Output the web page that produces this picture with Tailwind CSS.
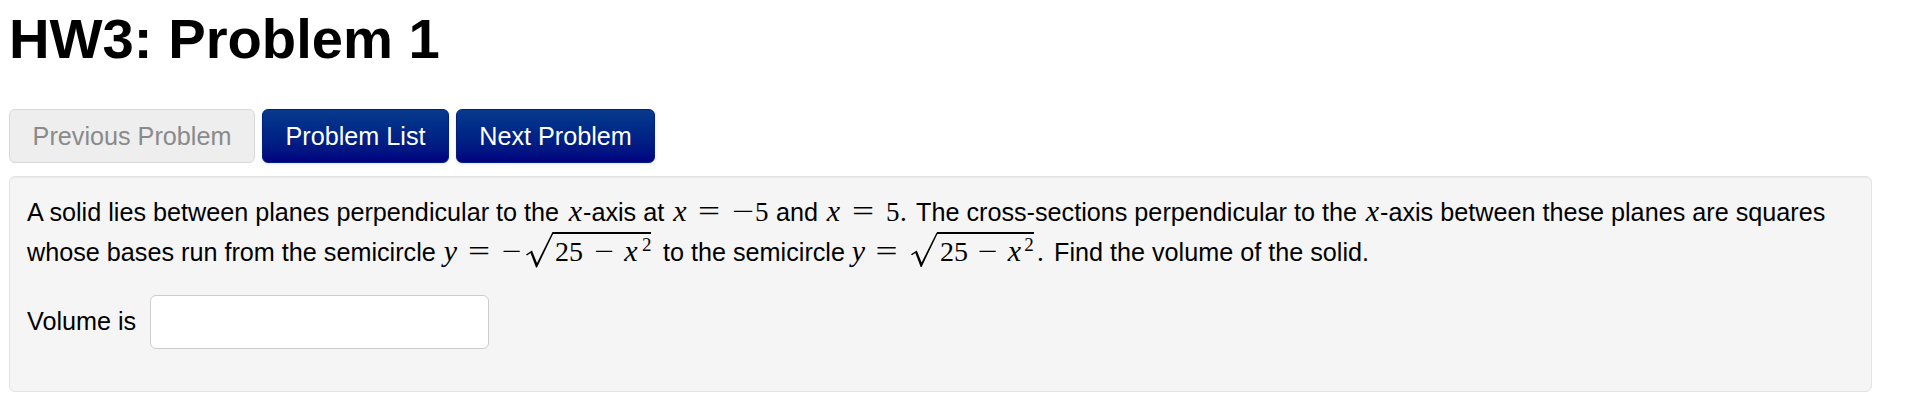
<!DOCTYPE html>
<html>
<head>
  <title>HW3: Problem 1</title>
  <script src="https://cdn.jsdelivr.net/npm/@tailwindcss/browser@4"></script>
</head>
<body class="bg-white text-black font-['Liberation_Sans',Arial,sans-serif]">
  <div class="pl-[9px] pr-[39px]">
    <h1 class="pt-[6px] h-[109px] text-[56.2px] leading-[66px] font-bold">HW3: Problem 1</h1>

    <!-- nav buttons -->
    <div class="flex gap-[7px] text-[25.2px]">
      <a class="flex items-center justify-center w-[246px] h-[54px] pt-[2px] rounded-md border border-[#d8d8d8] bg-[#eeeeee] text-[#8a8a8a]">Previous Problem</a>
      <a class="flex items-center justify-center w-[187px] h-[54px] pt-[2px] rounded-md border border-[#00207f] bg-linear-to-b from-[#0a3a8c] to-[#00007f] text-white shadow-sm">Problem List</a>
      <a class="flex items-center justify-center w-[199px] h-[54px] pt-[2px] rounded-md border border-[#00207f] bg-linear-to-b from-[#0a3a8c] to-[#00007f] text-white shadow-sm">Next Problem</a>
    </div>

    <!-- problem body -->
    <div class="mt-[13px] h-[216px] rounded-md border border-[#e3e3e3] bg-[#f5f5f5] px-[17px] pt-[14px] text-[25.2px] leading-[40px] shadow-[inset_0_1px_1px_rgba(0,0,0,0.05)]">
      <div class="flex items-baseline h-[40px] whitespace-nowrap">
        <span class="flex-none w-[541px]">A solid lies between planes perpendicular to the</span>
        <i class="flex-none w-[15px] text-center font-['Liberation_Serif',serif] text-[30px]">x</i>
        <span class="flex-none w-[90px]">-axis at</span>
        <i class="flex-none w-[14px] text-center font-['Liberation_Serif',serif] text-[30px]">x</i>
        <span class="flex-none ml-[11px] w-[22px] text-center font-['Liberation_Serif',serif] text-[29px] scale-x-[1.35]">=</span>
        <span class="flex-none ml-[13px] w-[20px] text-center font-['Liberation_Serif',serif] text-[29px] scale-x-[1.35]">−</span>
        <span class="flex-none ml-[2px] w-[13px] text-center font-['Liberation_Serif',serif] text-[27px]">5</span>
        <span class="flex-none ml-[8px] w-[50px]">and</span>
        <i class="flex-none w-[15px] text-center font-['Liberation_Serif',serif] text-[30px]">x</i>
        <span class="flex-none ml-[12px] w-[20px] text-center font-['Liberation_Serif',serif] text-[29px] scale-x-[1.35]">=</span>
        <span class="flex-none ml-[13px] w-[13px] text-center font-['Liberation_Serif',serif] text-[27px]">5</span>
        <span class="flex-none ml-[1px] w-[4px] font-['Liberation_Serif',serif] text-[27px]">.</span>
        <span class="flex-none ml-[12px] w-[449px]">The cross-sections perpendicular to the</span>
        <i class="flex-none w-[15px] text-center font-['Liberation_Serif',serif] text-[30px]">x</i>
        <span class="flex-none">-axis between these planes are squares</span>
      </div>
      <div class="flex items-baseline h-[40px] whitespace-nowrap">
        <span class="flex-none w-[416px]">whose bases run from the semicircle</span>
        <i class="flex-none w-[15px] text-center font-['Liberation_Serif',serif] text-[30px]">y</i>
        <span class="flex-none ml-[11px] w-[20px] text-center font-['Liberation_Serif',serif] text-[29px] scale-x-[1.35]">=</span>
        <span class="flex-none ml-[14px] w-[17px] text-center font-['Liberation_Serif',serif] text-[29px] scale-x-[1.2]">−</span>
        <span class="relative flex-none self-start ml-[6px] w-[27px] h-[36px]">
          <svg class="absolute left-0 top-[1px] w-[28px] h-[36px]" viewBox="0 0 28 36"><path d="M0 22.5 L6 18.5 L11 31 L26.5 0 L28 0 L11 35.5 L10 35.5 L4.5 21 L1 23.5 Z" fill="black"/></svg>
        </span>
        <span class="relative flex-none flex items-baseline w-[98px] font-['Liberation_Serif',serif]">
          <span class="absolute left-0 right-0 top-[1px] h-[1.5px] bg-black"></span>
          <span class="flex-none ml-[2px] w-[28px] text-center text-[28px]">25</span>
          <span class="flex-none ml-[12px] w-[18px] text-center text-[29px] scale-x-[1.2]">−</span>
          <i class="flex-none ml-[10px] w-[16px] text-center text-[30px]">x</i>
          <span class="flex-none ml-[3px] w-[9px] text-center text-[19px] -translate-y-[10px]">2</span>
        </span>
        <span class="flex-none ml-[12px] w-[188px]">to the semicircle</span>
        <i class="flex-none w-[15px] text-center font-['Liberation_Serif',serif] text-[30px]">y</i>
        <span class="flex-none ml-[10px] w-[21px] text-center font-['Liberation_Serif',serif] text-[29px] scale-x-[1.35]">=</span>
        <span class="relative flex-none self-start ml-[14px] w-[26px] h-[36px]">
          <svg class="absolute left-0 top-[1px] w-[27px] h-[36px]" viewBox="0 0 28 36"><path d="M0 22.5 L6 18.5 L11 31 L26.5 0 L28 0 L11 35.5 L10 35.5 L4.5 21 L1 23.5 Z" fill="black"/></svg>
        </span>
        <span class="relative flex-none flex items-baseline w-[97px] font-['Liberation_Serif',serif]">
          <span class="absolute left-0 right-0 top-[1px] h-[1.5px] bg-black"></span>
          <span class="flex-none ml-[3px] w-[27px] text-center text-[28px]">25</span>
          <span class="flex-none ml-[11px] w-[19px] text-center text-[29px] scale-x-[1.2]">−</span>
          <i class="flex-none ml-[10px] w-[15px] text-center text-[30px]">x</i>
          <span class="flex-none ml-[2px] w-[10px] text-center text-[19px] -translate-y-[10px]">2</span>
        </span>
        <span class="flex-none ml-[3px] w-[4px] font-['Liberation_Serif',serif] text-[27px]">.</span>
        <span class="flex-none ml-[13px]">Find the volume of the solid.</span>
      </div>
      <div class="mt-[24px] flex items-center">
        <label class="w-[123px] mb-[3px]">Volume is</label>
        <input type="text" class="w-[339px] h-[54px] rounded-md border border-[#cccccc] bg-white" />
      </div>
    </div>
  </div>
</body>
</html>
